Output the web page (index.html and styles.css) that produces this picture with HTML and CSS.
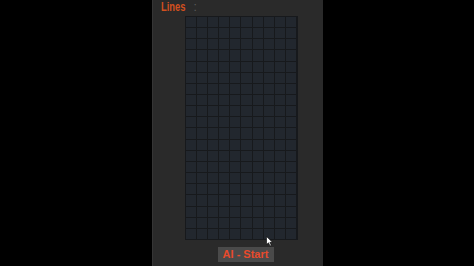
FILE: index.html
```
<!DOCTYPE html>
<html>
<head>
<meta charset="utf-8">
<link rel="stylesheet" href="styles.css">
</head>
<body>
<div class="stage">
  <div class="panel">
    <div class="header"><span class="label">Lines</span><span class="colon">:</span></div>
    <div class="board" id="board"></div>
    <div class="actions"><button class="start">AI - Start</button></div>
    <svg class="cursor" width="8" height="11" viewBox="0 0 8 11"><path d="M0.5 0.5 L0.5 8.5 L2.5 6.8 L4 10 L5.3 9.4 L3.9 6.3 L6.5 6.3 Z" fill="#fff" stroke="#000" stroke-width="0.6"/></svg>
  </div>
</div>
<script src="app.js"></script>
</body>
</html>
```
FILE: styles.css
```
html, body {
  margin: 0;
  padding: 0;
  background: #000;
  height: 100%;
}
.stage {
  display: flex;
  justify-content: center;
  height: 266px;
  overflow: hidden;
}
.panel {
  position: relative;
  width: 170px;
  height: 266px;
  background: #2a2a2a;
  border-left: 1px solid #353535;
  font-family: "Liberation Sans", Arial, sans-serif;
}
.header {
  display: flex;
  align-items: center;
  margin-left: 8px;
  height: 14px;
  font-size: 12px;
  line-height: 14px;
}
.label {
  display: inline-block;
  width: 24px;
  color: #d2501f;
  font-weight: bold;
  transform: scaleX(0.78);
  transform-origin: left center;
  white-space: nowrap;
}
.colon {
  color: #5a5a5a;
  margin-left: 9px;
}
.board {
  margin-top: 2px;
  margin-left: 32px;
  width: 113px;
  height: 224px;
  box-sizing: border-box;
  padding: 1px;
  background: #17191c;
  display: grid;
  grid-template-columns: repeat(10, 1fr);
  grid-template-rows: repeat(20, 1fr);
  gap: 1px;
}
.cell {
  background: #22272e;
}
.actions {
  margin-top: 4px;
  margin-left: 65px;
}
.start {
  width: 56px;
  height: 15px;
  padding: 0;
  border: none;
  background: #4a4a4a;
  color: #e84a2c;
  font-family: "Liberation Sans", Arial, sans-serif;
  font-weight: bold;
  font-size: 11px;
  line-height: 15px;
}
.cursor {
  position: absolute;
  left: 113px;
  top: 236px;
}
```
FILE: app.js
```
var b = document.getElementById('board');
for (var i = 0; i < 200; i++) {
  var c = document.createElement('div');
  c.className = 'cell';
  b.appendChild(c);
}
```
